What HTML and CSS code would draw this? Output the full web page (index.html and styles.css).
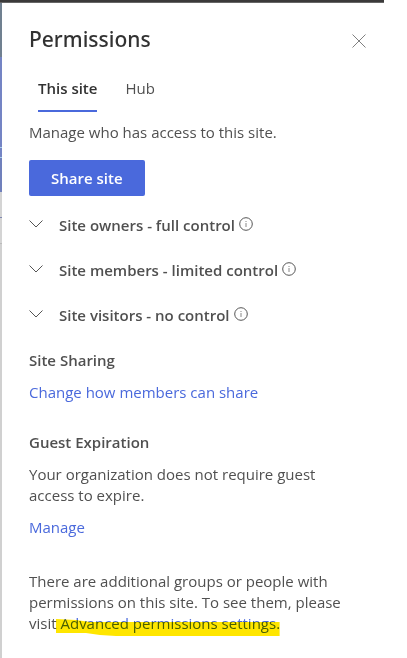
FILE: index.html
```html
<!DOCTYPE html>
<html lang="en">
<head>
    <meta charset="UTF-8">
    <meta name="viewport" content="width=device-width, initial-scale=1.0">
    <title>Permissions</title>
    <link rel="stylesheet" href="styles.css">
</head>
<body>
    <div class="top-bar"></div>
    <div class="page">
        <div class="page-edge"></div>
        <main class="panel">
            <header class="panel-header">
                <h1>Permissions</h1>
                <button class="close" type="button" aria-label="Close">
                    <svg width="14" height="14" viewBox="0 0 14 14"><path d="M0.5 0.5L13.5 13.5M13.5 0.5L0.5 13.5"/></svg>
                </button>
            </header>

            <div class="tabs" role="tablist">
                <button class="tab active" type="button" role="tab" aria-selected="true">This site</button>
                <button class="tab" type="button" role="tab" aria-selected="false">Hub</button>
            </div>

            <p class="intro">Manage who has access to this site.</p>
            <button class="share" type="button">Share site</button>

            <ul class="groups">
                <li>
                    <button class="group" type="button" aria-expanded="false">
                        <svg class="chevron" width="14" height="8" viewBox="0 0 14 8"><path d="M0.5 0.5L7 7L13.5 0.5"/></svg>
                        <span>Site owners - full control</span>
                        <svg class="info" width="14" height="14" viewBox="0 0 14 14"><circle cx="7" cy="7" r="6.3"/><path class="letter" d="M7 6V10M7 4V5"/></svg>
                    </button>
                </li>
                <li>
                    <button class="group" type="button" aria-expanded="false">
                        <svg class="chevron" width="14" height="8" viewBox="0 0 14 8"><path d="M0.5 0.5L7 7L13.5 0.5"/></svg>
                        <span>Site members - limited control</span>
                        <svg class="info" width="14" height="14" viewBox="0 0 14 14"><circle cx="7" cy="7" r="6.3"/><path class="letter" d="M7 6V10M7 4V5"/></svg>
                    </button>
                </li>
                <li>
                    <button class="group" type="button" aria-expanded="false">
                        <svg class="chevron" width="14" height="8" viewBox="0 0 14 8"><path d="M0.5 0.5L7 7L13.5 0.5"/></svg>
                        <span>Site visitors - no control</span>
                        <svg class="info" width="14" height="14" viewBox="0 0 14 14"><circle cx="7" cy="7" r="6.3"/><path class="letter" d="M7 6V10M7 4V5"/></svg>
                    </button>
                </li>
            </ul>

            <section>
                <h2>Site Sharing</h2>
                <p><a href="#">Change how members can share</a></p>
            </section>

            <section>
                <h2>Guest Expiration</h2>
                <p>Your organization does not require guest access to expire.</p>
                <p><a href="#">Manage</a></p>
            </section>

            <section class="more">
                <p>There are additional groups or people with permissions on this site. To see them, please visit <a class="advanced" href="#">Advanced permissions settings.<svg class="marker" viewBox="0 0 224 18" preserveAspectRatio="none"><path d="M0 0L20 1L34 3H224V17H110L60 17L44 16L30 14H0Z"/></svg></a></p>
            </section>
        </main>
    </div>
</body>
</html>
```

FILE: styles.css
```css
* {
    margin: 0;
    padding: 0;
    box-sizing: border-box;
}

body {
    display: flex;
    flex-direction: column;
    min-height: 100vh;
    background-color: #fff;
    color: #505050;
    font-family: "Open Sans", "Noto Sans", sans-serif;
    font-size: 15px;
    line-height: 21px;
}

.top-bar {
    height: 3px;
    margin-right: 23px;
    background-color: #3b3a3a;
    border-bottom: 1px solid #666;
}

.page {
    display: flex;
    flex: 1;
}

/* sliver of the site behind the panel */
.page-edge {
    width: 2px;
    background: linear-gradient(#708090 0 54px, #7484c4 54px 144px, #a8d0ec 144px 145px, #7484c4 145px 154px, #a8d0ec 154px 155px, #7080bc 155px 189px, #d4d4d4 189px 214px, #8088b0 214px 215px, #d4d4d4 215px 240px, #bbb 240px 241px, #d0d0d0 241px);
}

.panel {
    flex: 1;
    padding: 20px 41px 20px 27px;
}

.panel-header {
    display: flex;
    justify-content: space-between;
    align-items: center;
}

h1 {
    color: #323232;
    font-family: "Noto Sans", "Open Sans", sans-serif;
    font-size: 21px;
    font-weight: 500;
    line-height: 32px;
}

button {
    border: none;
    background: none;
    color: inherit;
    font: inherit;
    cursor: pointer;
}

svg {
    fill: none;
    stroke: #555;
}

.close {
    padding-top: 4px;
}

.close svg {
    display: block;
    stroke: #808080;
}

.tabs {
    display: flex;
    gap: 28px;
    padding-left: 9px;
    margin-top: 16px;
}

.tab {
    height: 41px;
    padding-bottom: 4px;
    border-bottom: 2px solid transparent;
}

.active {
    border-color: #4a69dc;
    color: #323232;
    font-weight: 600;
}

.intro {
    margin-top: 10px;
}

.share {
    height: 36px;
    margin-top: 17px;
    padding: 0 22px;
    border-radius: 2px;
    background-color: #4a69dc;
    color: #fff;
    font-weight: 600;
}

.groups {
    margin-top: 7px;
    list-style: none;
}

.group {
    display: flex;
    align-items: center;
    height: 45px;
    font-weight: 600;
}

.chevron {
    margin-right: 16px;
    margin-bottom: 4px;
}

.info {
    margin-left: 4px;
    margin-bottom: 4px;
}

.letter {
    stroke: #888;
}

h2 {
    font-size: 15px;
    font-weight: 600;
    line-height: 21px;
}

section {
    margin-top: 29px;
    padding-right: 20px;
}

.groups + section {
    margin-top: 12px;
}

.more {
    margin-top: 33px;
}

section p + p,
h2 + p {
    margin-top: 11px;
}

a {
    color: #4a69dc;
    text-decoration: none;
}

a:hover {
    text-decoration: underline;
}

.advanced {
    position: relative;
    white-space: nowrap;
}

.marker {
    position: absolute;
    left: -4px;
    bottom: -4px;
    width: calc(100% + 4px);
    height: 18px;
    fill: #ffe600;
    stroke: none;
    mix-blend-mode: multiply;
}
```
